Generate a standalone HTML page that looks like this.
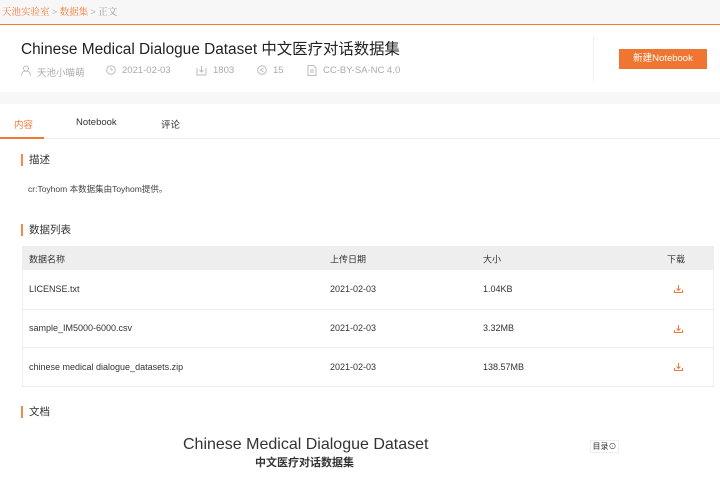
<!DOCTYPE html>
<html><head><meta charset="utf-8"><style>
*{margin:0;padding:0;box-sizing:border-box}
body{width:720px;height:477px;overflow:hidden;background:#f7f7f7;font-family:"Liberation Sans","Noto Sans CJK SC",sans-serif;color:#333;position:relative}
.abs{position:absolute}
.bc{left:2px;top:4px;font-size:9.5px;font-family:"Liberation Serif","Noto Serif CJK SC",serif;color:#999}
.bc .o{color:#f07a3a}
.hdr{left:0;top:24px;width:720px;height:68px;background:#fff;border-top:1px solid #f07a3a}
.title{left:21px;top:37px;font-size:15.4px;color:#222}
.meta{top:65px;font-size:9.5px;color:#aaa}
.btn{left:619px;top:49px;width:88px;height:20px;background:#f07530;color:#fff;font-size:9.5px;text-align:center;line-height:20px}
.vl{left:593px;top:37px;width:1px;height:44px;background:#eee}
.main{left:0;top:104px;width:720px;height:373px;background:#fff}
.tab{top:117px;font-size:9.5px;color:#333}
.tabline{left:0;top:138px;width:720px;height:1px;background:#eee}
.sec{left:21px;font-size:10.5px;color:#333;border-left:2px solid #f28a4c;padding-left:6px;line-height:12px}
.tbl{left:22px;top:246px;width:692px;border:1px solid #eee}
.row{height:38.5px;border-top:1px solid #eee;font-size:9px;color:#333;position:relative}
.row span,.th span{position:absolute;top:50%;transform:translateY(-50%)}
.th{height:23px;background:#eee;font-size:9px;color:#333;position:relative}
.dl{position:absolute;left:651px;top:15px}
</style></head><body>
<div class="abs bc"><span class="o">天池实验室</span> &gt; <span class="o">数据集</span> &gt; 正文</div>
<div class="abs hdr"></div>
<div class="abs title">Chinese Medical Dialogue Dataset 中文医疗对话数据集</div>
<svg class="abs" style="left:21px;top:65px" width="10" height="11" viewBox="0 0 10 11"><circle cx="5" cy="3.5" r="2.5" fill="none" stroke="#bbb"/><path d="M0.5 10.5c0-3 2-4.5 4.5-4.5s4.5 1.5 4.5 4.5" fill="none" stroke="#bbb"/></svg>
<div class="abs meta" style="left:37px">天池小喵萌</div>
<svg class="abs" style="left:106px;top:65px" width="10" height="10"><circle cx="5" cy="5" r="4.3" fill="none" stroke="#bbb"/><path d="M5 2.5V5h2" fill="none" stroke="#bbb"/></svg>
<div class="abs meta" style="left:122px">2021-02-03</div>
<svg class="abs" style="left:196px;top:65px" width="11" height="11"><path d="M1 3v7h9V3M5.5 1v6M3.5 5l2 2 2-2" fill="none" stroke="#bbb"/></svg>
<div class="abs meta" style="left:213px">1803</div>
<svg class="abs" style="left:257px;top:65px" width="10" height="10"><circle cx="5" cy="5" r="4.3" fill="none" stroke="#bbb"/><path d="M6.5 3L3.5 5l3 2" fill="none" stroke="#bbb"/></svg>
<div class="abs meta" style="left:273px">15</div>
<svg class="abs" style="left:307px;top:65px" width="10" height="11"><path d="M1 .5h5.5l2.5 2.5v7.5H1z M3 5h4M3 7h4" fill="none" stroke="#bbb"/></svg>
<div class="abs meta" style="left:323px">CC-BY-SA-NC 4.0</div>
<div class="abs vl"></div>
<div class="abs btn">新建Notebook</div>
<div class="abs main"></div>
<div class="abs tab" style="left:14px;color:#f07a3a">内容</div>
<div class="abs" style="left:0;top:137px;width:44px;height:2px;background:#f07a3a;z-index:2"></div>
<div class="abs tab" style="left:76px">Notebook</div>
<div class="abs tab" style="left:161px">评论</div>
<div class="abs tabline"></div>
<div class="abs sec" style="top:154px">描述</div>
<div class="abs" style="left:28px;top:183px;font-size:8.5px;color:#444">cr:Toyhom 本数据集由Toyhom提供。</div>
<div class="abs sec" style="top:224px">数据列表</div>
<div class="abs tbl">
<div class="th"><span style="left:6px">数据名称</span><span style="left:307px">上传日期</span><span style="left:460px">大小</span><span style="left:644px">下载</span></div>
<div class="row" style="border-top:none"><span style="left:6px">LICENSE.txt</span><span style="left:307px">2021-02-03</span><span style="left:460px">1.04KB</span><svg class="dl" width="9" height="8"><path d="M4.5 0v5M2.5 3.5l2 2 2-2M.5 5v2.5h8V5" fill="none" stroke="#f07a3a"/></svg></div>
<div class="row"><span style="left:6px">sample_IM5000-6000.csv</span><span style="left:307px">2021-02-03</span><span style="left:460px">3.32MB</span><svg class="dl" width="9" height="8"><path d="M4.5 0v5M2.5 3.5l2 2 2-2M.5 5v2.5h8V5" fill="none" stroke="#f07a3a"/></svg></div>
<div class="row"><span style="left:6px">chinese medical dialogue_datasets.zip</span><span style="left:307px">2021-02-03</span><span style="left:460px">138.57MB</span><svg class="dl" width="9" height="8"><path d="M4.5 0v5M2.5 3.5l2 2 2-2M.5 5v2.5h8V5" fill="none" stroke="#f07a3a"/></svg></div>
</div>
<div class="abs sec" style="top:406px">文档</div>
<div class="abs" style="left:183px;top:436px;font-size:16px;color:#333">Chinese Medical Dialogue Dataset</div>
<div class="abs" style="left:255px;top:454px;font-size:11px;color:#333;font-weight:bold">中文医疗对话数据集</div>
<div class="abs" style="left:590px;top:440px;width:29px;height:13px;border:1px solid #eee;font-size:8px;line-height:11px;text-align:center;color:#333">目录⊙</div>
</body></html>
